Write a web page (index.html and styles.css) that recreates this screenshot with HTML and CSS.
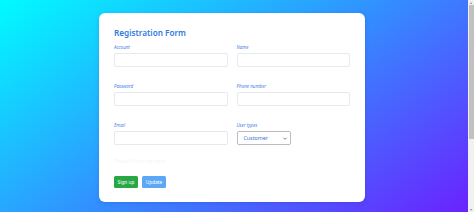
FILE: index.html
```html
<!DOCTYPE html>
<html lang="en">
<head>
    <meta charset="UTF-8">
    <meta name="viewport" content="width=device-width, initial-scale=1.0">
    <title>Registration Form</title>
    <link rel="stylesheet" href="styles.css">
</head>
<body>
    <div class="viewport">
        <div class="page">
            <form class="reg-form">
                <h2 class="reg-form__title">Registration Form</h2>

                <div class="reg-form__grid">
                    <div class="reg-form__field">
                        <label class="reg-form__label" for="account">Account</label>
                        <input class="reg-form__input" id="account" type="text">
                    </div>
                    <div class="reg-form__field">
                        <label class="reg-form__label" for="name">Name</label>
                        <input class="reg-form__input" id="name" type="text">
                    </div>
                    <div class="reg-form__field">
                        <label class="reg-form__label" for="password">Password</label>
                        <input class="reg-form__input" id="password" type="password">
                    </div>
                    <div class="reg-form__field">
                        <label class="reg-form__label" for="phone">Phone number</label>
                        <input class="reg-form__input" id="phone" type="text">
                    </div>
                    <div class="reg-form__field">
                        <label class="reg-form__label" for="email">Email</label>
                        <input class="reg-form__input" id="email" type="email">
                    </div>
                    <div class="reg-form__field">
                        <label class="reg-form__label" for="usertype">User types</label>
                        <div class="reg-form__select">
                            <span>Customer</span>
                            <svg width="4" height="3" viewBox="0 0 10 6"><path d="M1 1l4 4 4-4" fill="none" stroke="#555" stroke-width="1.8"/></svg>
                        </div>
                    </div>
                </div>

                <p class="reg-form__message">Please fill in all the fields</p>

                <div class="reg-form__actions">
                    <button type="button" class="reg-form__btn reg-form__btn--signup">Sign up</button>
                    <button type="button" class="reg-form__btn reg-form__btn--update">Update</button>
                </div>
            </form>
        </div>

        <!-- fake scrollbar, the page is taller than the window in the original -->
        <div class="scrollbar">
            <span class="scrollbar__arrow">&#9652;</span>
            <div class="scrollbar__track">
                <div class="scrollbar__thumb"></div>
            </div>
            <span class="scrollbar__arrow">&#9662;</span>
        </div>
    </div>
</body>
</html>
```

FILE: styles.css
```css
html, body {
    margin: 0;
    height: 100%;
    overflow: hidden;
}

body {
    font-family: "Noto Sans", "Open Sans", sans-serif;
}

.viewport {
    display: flex;
    height: 212px;
}

.page {
    flex: 1;
    padding: 13px 4px 0 0;
    background: linear-gradient(145deg, #00fbff 0%, #3290ff 50%, #6a22ff 100%);
}

.scrollbar {
    width: 6px;
    display: flex;
    flex-direction: column;
    align-items: center;
    background: #f1f1f1;
}

.scrollbar__arrow {
    font-size: 4px;
    line-height: 5px;
    color: #8f8f8f;
}

.scrollbar__track {
    flex: 1;
    width: 100%;
}

.scrollbar__thumb {
    width: 5px;
    height: 134px;
    margin: 0 auto;
    background: #c1c1c1;
}

.reg-form {
    width: 266px;
    box-sizing: border-box;
    margin: 0 auto;
    padding: 14px 15px 14px;
    background: #fff;
    border-radius: 6px;
    box-shadow: 0 1px 4px rgba(40, 40, 120, 0.2);
}

.reg-form__title {
    margin: 0 0 5px;
    font-size: 8.2px;
    line-height: 12px;
    font-weight: 600;
    color: #2f7be0;
}

.reg-form__grid {
    display: grid;
    grid-template-columns: 1fr 1fr;
    column-gap: 9px;
    row-gap: 16px;
}

.reg-form__field {
    display: flex;
    flex-direction: column;
}

.reg-form__label {
    font-size: 4.5px;
    line-height: 6px;
    font-style: italic;
    color: #4b82e3;
    margin-bottom: 3px;
}

.reg-form__input {
    height: 14px;
    box-sizing: border-box;
    margin: 0;
    padding: 0 3px;
    border: 1px solid #e6e9ee;
    border-radius: 2px;
    background: #fff;
    font-size: 6px;
}

.reg-form__select {
    width: 54px;
    height: 14px;
    box-sizing: border-box;
    display: flex;
    align-items: center;
    justify-content: space-between;
    padding: 0 3px 0 6px;
    border: 1px solid #b9bdc4;
    border-radius: 2px;
    font-size: 5.3px;
    color: #3f6fd9;
    box-shadow: 0 0 1px rgba(0, 0, 0, 0.15);
}

.reg-form__message {
    margin: 13px 0 0;
    font-size: 4.5px;
    line-height: 6px;
    color: #f3f6fb;
}

.reg-form__actions {
    display: flex;
    gap: 4px;
    margin-top: 12px;
}

.reg-form__btn {
    width: 24px;
    height: 12px;
    padding: 0;
    border: none;
    border-radius: 1.5px;
    font-family: inherit;
    font-size: 4.8px;
    color: #fff;
    cursor: pointer;
}

.reg-form__btn--signup {
    background: #28a745;
}

.reg-form__btn--update {
    background: #5ca8f6;
}
```
